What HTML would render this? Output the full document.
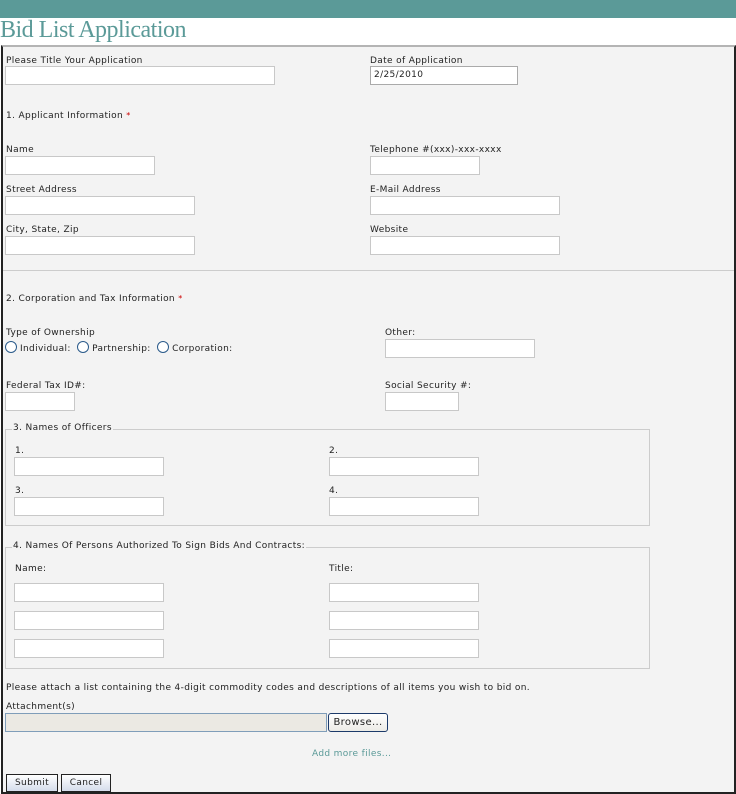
<!DOCTYPE html>
<html><head><meta charset="utf-8"><style>
*{margin:0;padding:0;box-sizing:border-box}
body{width:736px;height:794px;background:#fff;position:relative;overflow:hidden;font-family:"DejaVu Sans","Liberation Sans",sans-serif;font-size:9px;letter-spacing:0.35px;color:#222}
.bar{position:absolute;left:0;top:0;width:736px;height:18px;background:#5b9a98}
h1{position:absolute;left:0;top:17px;font-family:"Liberation Serif",serif;font-weight:normal;font-size:24px;color:#5b9a98;letter-spacing:-0.5px}
.box{position:absolute;left:1px;top:45px;width:735px;height:749px;background:#f3f3f3;border-top:2px solid #b4b4b4;border-left:2px solid #222;border-right:2px solid #222;border-bottom:2px solid #222}
.a{position:absolute;white-space:nowrap;margin-top:2px}
.i{position:absolute;background:#fff;border:1px solid #c8c8c8;height:19px}
.r{color:#c00;font-size:8px;vertical-align:top}
.fs{position:absolute;border:1px solid #ccc}
.rad{display:inline-block;width:12px;height:12px;border:1.5px solid #2a5a8a;border-radius:50%;background:#fff;vertical-align:-2px;margin-right:3px}
.btn{position:absolute;background:linear-gradient(#fff,#d4dceb);border:1px solid #222;text-align:center;font-size:9px;line-height:15px}
</style></head><body>
<div class="bar"></div>
<h1>Bid List Application</h1>
<div class="box"></div>
<div class="a" style="left:6px;top:54px">Please Title Your Application</div>
<div class="i" style="left:5px;top:66px;width:270px"></div>
<div class="a" style="left:370px;top:54px">Date of Application</div>
<div class="i" style="left:370px;top:66px;width:148px;border-color:#aaa;padding:3px 0 0 3px">2/25/2010</div>
<div class="a" style="left:6px;top:109px">1. Applicant Information <span class="r">*</span></div>
<div class="a" style="left:6px;top:143px">Name</div>
<div class="i" style="left:5px;top:156px;width:150px"></div>
<div class="a" style="left:370px;top:143px">Telephone #(xxx)-xxx-xxxx</div>
<div class="i" style="left:370px;top:156px;width:110px"></div>
<div class="a" style="left:6px;top:183px">Street Address</div>
<div class="i" style="left:5px;top:196px;width:190px"></div>
<div class="a" style="left:370px;top:183px">E-Mail Address</div>
<div class="i" style="left:370px;top:196px;width:190px"></div>
<div class="a" style="left:6px;top:223px">City, State, Zip</div>
<div class="i" style="left:5px;top:236px;width:190px"></div>
<div class="a" style="left:370px;top:223px">Website</div>
<div class="i" style="left:370px;top:236px;width:190px"></div>
<div style="position:absolute;left:3px;top:270px;width:731px;height:1px;background:#ccc"></div>
<div class="a" style="left:6px;top:292px">2. Corporation and Tax Information <span class="r">*</span></div>
<div class="a" style="left:6px;top:326px">Type of Ownership</div>
<div class="a" style="left:5px;top:339px"><span class="rad"></span>Individual: &nbsp;<span class="rad"></span>Partnership: &nbsp;<span class="rad"></span>Corporation:</div>
<div class="a" style="left:385px;top:326px">Other:</div>
<div class="i" style="left:385px;top:339px;width:150px"></div>
<div class="a" style="left:6px;top:379px">Federal Tax ID#:</div>
<div class="i" style="left:5px;top:392px;width:70px"></div>
<div class="a" style="left:385px;top:379px">Social Security #:</div>
<div class="i" style="left:385px;top:392px;width:74px"></div>
<div class="fs" style="left:5px;top:429px;width:645px;height:97px"></div>
<div class="a" style="left:12px;top:421px;background:#f3f3f3;padding:0 1px">3. Names of Officers</div>
<div class="a" style="left:15px;top:444px">1.</div>
<div class="i" style="left:14px;top:457px;width:150px"></div>
<div class="a" style="left:329px;top:444px">2.</div>
<div class="i" style="left:329px;top:457px;width:150px"></div>
<div class="a" style="left:15px;top:484px">3.</div>
<div class="i" style="left:14px;top:497px;width:150px"></div>
<div class="a" style="left:329px;top:484px">4.</div>
<div class="i" style="left:329px;top:497px;width:150px"></div>
<div class="fs" style="left:5px;top:547px;width:645px;height:122px"></div>
<div class="a" style="left:12px;top:539px;background:#f3f3f3;padding:0 1px">4. Names Of Persons Authorized To Sign Bids And Contracts:</div>
<div class="a" style="left:15px;top:562px">Name:</div>
<div class="a" style="left:329px;top:562px">Title:</div>
<div class="i" style="left:14px;top:583px;width:150px"></div>
<div class="i" style="left:329px;top:583px;width:150px"></div>
<div class="i" style="left:14px;top:611px;width:150px"></div>
<div class="i" style="left:329px;top:611px;width:150px"></div>
<div class="i" style="left:14px;top:639px;width:150px"></div>
<div class="i" style="left:329px;top:639px;width:150px"></div>
<div class="a" style="left:6px;top:681px">Please attach a list containing the 4-digit commodity codes and descriptions of all items you wish to bid on.</div>
<div class="a" style="left:6px;top:700px">Attachment(s)</div>
<div class="i" style="left:5px;top:713px;width:322px;background:#ebe9e3;border-color:#7f9db9"></div>
<div class="btn" style="left:328px;top:713px;width:60px;height:19px;line-height:17px;border-color:#1c3a6a;border-radius:3px;font-size:10px;background:linear-gradient(#fff,#ecebe6)">Browse...</div>
<div class="a" style="left:312px;top:747px;color:#5b9a98">Add more files...</div>
<div class="btn" style="left:6px;top:774px;width:52px;height:18px;line-height:17px">Submit</div>
<div class="btn" style="left:61px;top:774px;width:50px;height:18px;line-height:17px">Cancel</div>
</body></html>
